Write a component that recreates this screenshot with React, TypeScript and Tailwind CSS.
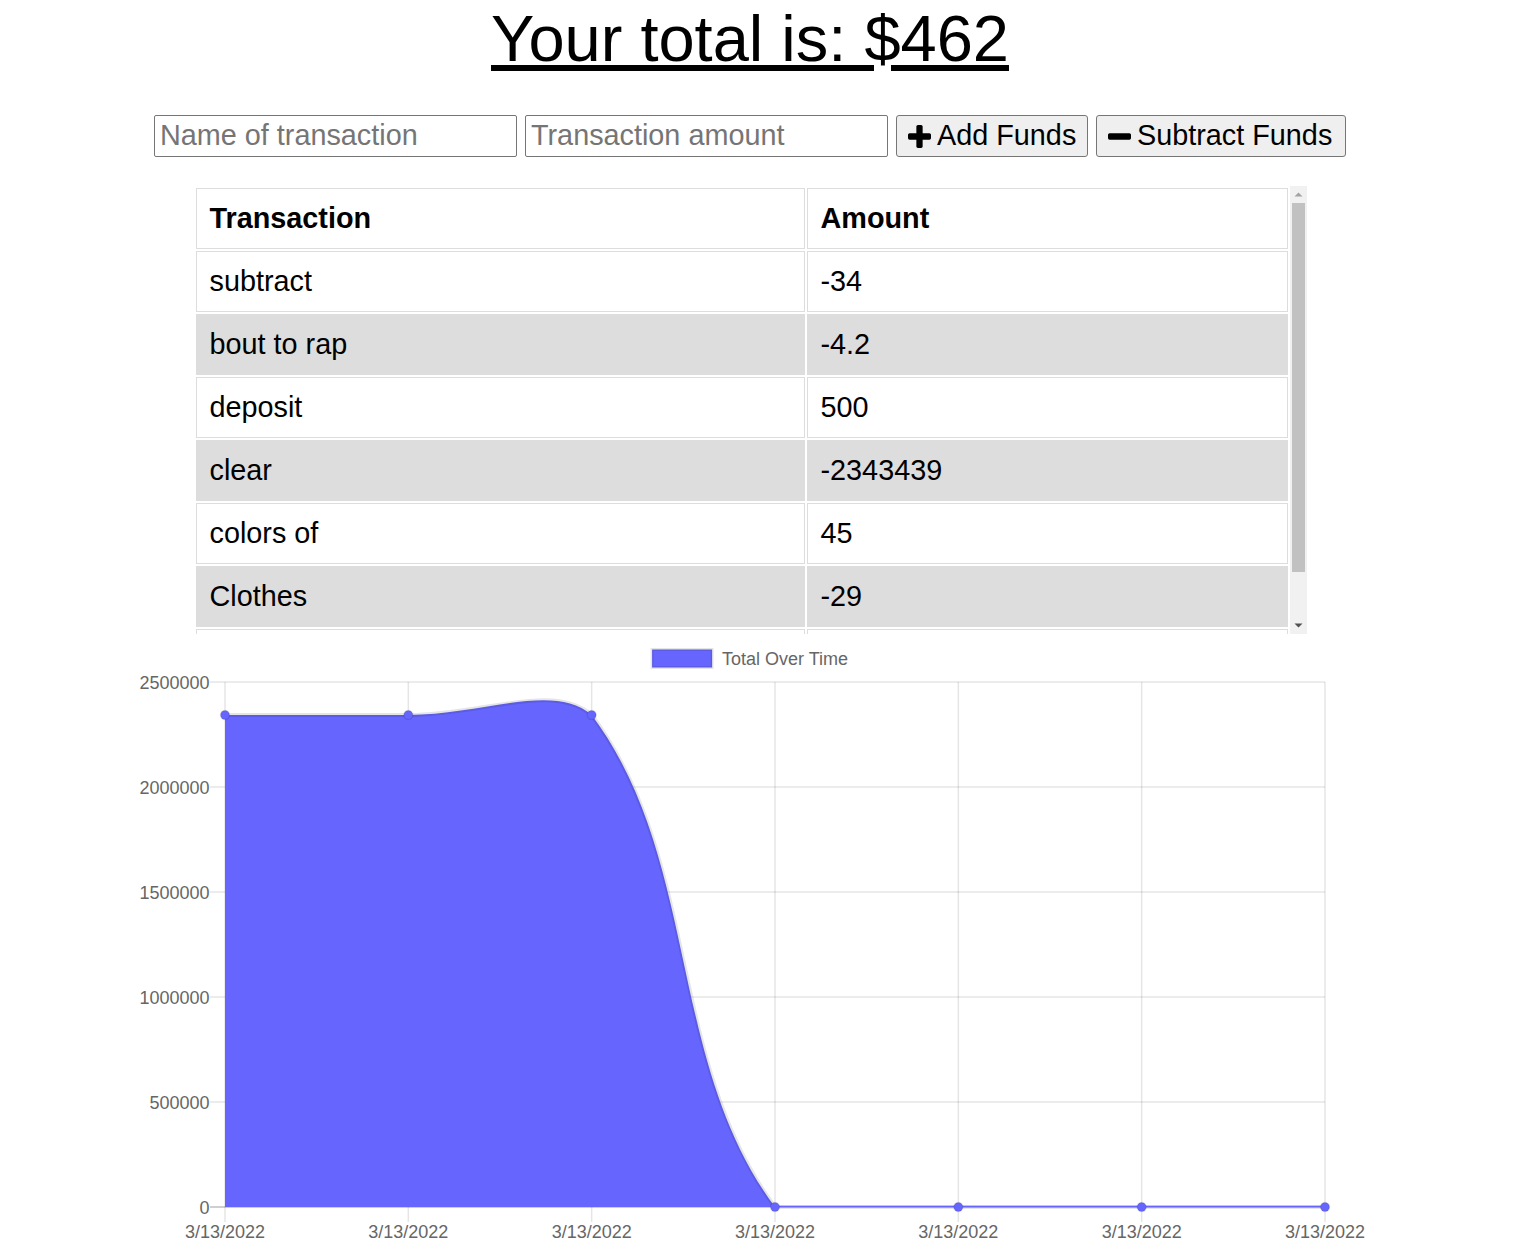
import React from 'react';

const rows: [string, string][] = [
  ['subtract', '-34'],
  ['bout to rap', '-4.2'],
  ['deposit', '500'],
  ['clear', '-2343439'],
  ['colors of', '45'],
  ['Clothes', '-29'],
  ['paycheck', '2343423.2'],
];

const xs = [225, 408.33, 591.67, 775, 958.33, 1141.67, 1325];
const ys = [715, 715, 715, 1207, 1207, 1207, 1207];
const yTicks: [string, number][] = [
  ['2500000', 682],
  ['2000000', 787],
  ['1500000', 892],
  ['1000000', 997],
  ['500000', 1102],
  ['0', 1207],
];

const curve =
  'M225,715 C298.3,715 335,715 408.3,715 C481.7,715 553.6,682 591.7,715 C700.4,860.7 666.4,1061.1 775,1207 C812.8,1207 885,1207 958.3,1207 C1031.7,1207 1068.3,1207 1141.7,1207 C1215,1207 1251.7,1207 1325,1207';

function PlusIcon() {
  return (
    <svg viewBox="0 192 1408 1408" className="w-[23px] h-[23px] shrink-0" fill="currentColor">
      <path d="M1408 800v192q0 40-28 68t-68 28h-416v416q0 40-28 68t-68 28h-192q-40 0-68-28t-28-68v-416h-416q-40 0-68-28t-28-68v-192q0-40 28-68t68-28h416v-416q0-40 28-68t68-28h192q40 0 68 28t28 68v416h416q40 0 68 28t28 68z" />
    </svg>
  );
}

function MinusIcon() {
  return (
    <svg viewBox="0 192 1408 1408" className="w-[23px] h-[23px] shrink-0" fill="currentColor">
      <path d="M1408 800v192q0 40-28 68t-68 28h-1216q-40 0-68-28t-28-68v-192q0-40 28-68t68-28h1216q40 0 68 28t28 68z" />
    </svg>
  );
}

function Chart() {
  const font = "'Liberation Sans', Arial, sans-serif";
  return (
    <svg viewBox="0 634 1500 622" className="w-[1500px] h-[622px] block">
      {/* legend */}
      <rect x={652.1} y={649.5} width={60} height={18} fill="#6666ff" stroke="rgba(0,0,0,0.1)" strokeWidth={3} />
      <text x={722} y={664.5} fontSize={18} fill="#666" fontFamily={font}>
        Total Over Time
      </text>

      {/* grid */}
      {yTicks.slice(0, 5).map(([, y]) => (
        <line key={y} x1={210} x2={1325} y1={y} y2={y} stroke="rgba(0,0,0,0.1)" strokeWidth={1.5} />
      ))}
      {xs.map((x) => (
        <line key={x} x1={x} x2={x} y1={682} y2={1222} stroke="rgba(0,0,0,0.1)" strokeWidth={1.5} />
      ))}
      <line x1={210} x2={1325} y1={1207} y2={1207} stroke="rgba(0,0,0,0.25)" strokeWidth={1.5} />

      {/* y labels */}
      {yTicks.map(([label, y]) => (
        <text key={label} x={209.5} y={y + 6.5} fontSize={18} fill="#666" textAnchor="end" fontFamily={font}>
          {label}
        </text>
      ))}

      {/* x labels */}
      {xs.map((x) => (
        <text key={x} x={x} y={1238} fontSize={18} fill="#666" textAnchor="middle" fontFamily={font}>
          3/13/2022
        </text>
      ))}

      {/* area */}
      <path d={`${curve} L1325,1207 L225,1207 Z`} fill="#6666ff" />
      <path d={curve} fill="none" stroke="rgba(0,0,0,0.1)" strokeWidth={4} />
      <line x1={775} x2={1325} y1={1206.5} y2={1206.5} stroke="#6666ff" strokeWidth={1.5} />

      {/* points */}
      {xs.map((x, i) => (
        <circle key={x} cx={x} cy={ys[i]} r={4.5} fill="#6666ff" stroke="rgba(0,0,0,0.1)" strokeWidth={1.5} />
      ))}
    </svg>
  );
}

export default function App() {
  return (
    <div className="w-[1500px] bg-white text-black font-['Liberation_Sans',Arial,sans-serif] flex flex-col items-center">
      <h1 className="pt-[2px] text-[65px] leading-[74px] font-normal underline">Your total is: $462</h1>

      {/* form */}
      <div className="mt-[39px] flex gap-2 text-[28.8px]">
        <input
          placeholder="Name of transaction"
          className="w-[363px] h-[42px] px-[5px] border border-[#767676] rounded-[2px] placeholder:text-[#757575] outline-none"
        />
        <input
          placeholder="Transaction amount"
          className="w-[363px] h-[42px] px-[5px] border border-[#767676] rounded-[2px] placeholder:text-[#757575] outline-none"
        />
        <button className="w-[192px] h-[42px] pl-[11px] flex items-center gap-[6px] bg-[#efefef] border border-[#767676] rounded-[3px] whitespace-nowrap">
          <PlusIcon />
          Add Funds
        </button>
        <button className="w-[250px] h-[42px] pl-[11px] flex items-center gap-[6px] bg-[#efefef] border border-[#767676] rounded-[3px] whitespace-nowrap">
          <MinusIcon />
          Subtract Funds
        </button>
      </div>

      {/* transactions table with scrollbar */}
      <div className="mt-[29px] flex h-[448px] w-[1113px]">
        <div className="w-[1096px] h-full overflow-hidden">
          <table className="w-[1096px] table-fixed border-separate border-spacing-[2px] text-[28.8px] leading-[33px]">
            <thead>
              <tr>
                <th className="w-[609px] text-left font-bold border border-[#dddddd] p-[13px]">Transaction</th>
                <th className="text-left font-bold border border-[#dddddd] p-[13px]">Amount</th>
              </tr>
            </thead>
            <tbody>
              {rows.map(([name, amount], i) => (
                <tr key={name} className={i % 2 === 1 ? 'bg-[#dddddd]' : 'bg-white'}>
                  <td className="border border-[#dddddd] p-[13px]">{name}</td>
                  <td className="border border-[#dddddd] p-[13px]">{amount}</td>
                </tr>
              ))}
            </tbody>
          </table>
        </div>
        <div className="w-[17px] h-full bg-[#f1f1f1] flex flex-col">
          <div className="h-[17px] flex items-center justify-center">
            <svg width="9" height="5" viewBox="0 0 9 5">
              <polygon points="0.5,4.5 8.5,4.5 4.5,0.5" fill="#a3a3a3" />
            </svg>
          </div>
          <div className="flex-1 flex flex-col">
            <div className="h-[369px] mx-[2px] bg-[#c1c1c1]" />
          </div>
          <div className="h-[17px] flex items-center justify-center">
            <svg width="9" height="5" viewBox="0 0 9 5">
              <polygon points="0.5,0.5 8.5,0.5 4.5,4.5" fill="#505050" />
            </svg>
          </div>
        </div>
      </div>

      <Chart />
    </div>
  );
}
